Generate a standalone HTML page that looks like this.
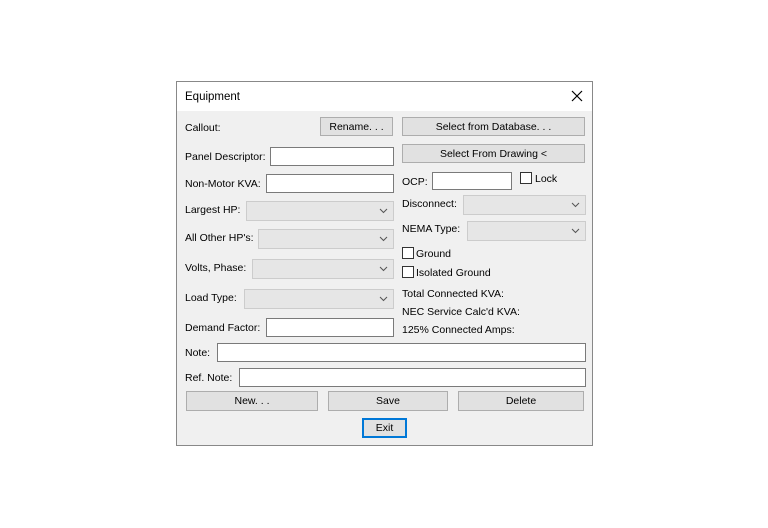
<!DOCTYPE html>
<html><head><style>
*{box-sizing:border-box;margin:0;padding:0}
body{width:768px;height:528px;background:#fff;position:relative;font-family:"Liberation Sans",sans-serif;font-size:10.5px;color:#000;overflow:hidden}
.win{position:absolute;left:176px;top:81px;width:417px;height:365px;border:1px solid #888;background:#f0f0f0}
.title{position:absolute;left:177px;top:82px;width:415px;height:29px;background:#fff}
.a{position:absolute;white-space:nowrap}
.l{position:absolute;white-space:nowrap;line-height:14px}
.in{position:absolute;background:#fff;border:1px solid #7a7a7a}
.btn{position:absolute;background:#e1e1e1;border:1px solid #adadad;text-align:center;line-height:18px}
.cb{position:absolute;background:#e6e6e6;border:1px solid #cccccc}
.cb svg{position:absolute;right:5px;top:6px}
.chk{position:absolute;width:12px;height:12px;background:#fff;border:1px solid #333}
</style></head><body>
<div class="win"></div>
<div class="title"></div>
<div class="l" style="left:185px;top:90px;font-size:11.5px">Equipment</div>
<svg class="a" style="left:571px;top:90px" width="12" height="12"><path d="M1 1L11 11M11 1L1 11" stroke="#000" stroke-width="1.2"/></svg>

<div class="l" style="left:185px;top:121px">Callout:</div>
<div class="btn" style="left:320px;top:117px;width:73px;height:19px">Rename. . .</div>
<div class="btn" style="left:402px;top:117px;width:183px;height:19px">Select from Database. . .</div>

<div class="l" style="left:185px;top:150px">Panel Descriptor:</div>
<div class="in" style="left:270px;top:147px;width:124px;height:19px"></div>
<div class="btn" style="left:402px;top:144px;width:183px;height:19px">Select From Drawing &lt;</div>

<div class="l" style="left:185px;top:177px">Non-Motor KVA:</div>
<div class="in" style="left:266px;top:174px;width:128px;height:19px"></div>
<div class="l" style="left:402px;top:175px">OCP:</div>
<div class="in" style="left:432px;top:172px;width:80px;height:18px"></div>
<div class="chk" style="left:520px;top:172px"></div>
<div class="l" style="left:535px;top:172px">Lock</div>

<div class="l" style="left:185px;top:203px">Largest HP:</div>
<div class="cb" style="left:246px;top:201px;width:148px;height:20px"><svg width="9" height="6"><path d="M1 1L4.5 4.5L8 1" stroke="#555" fill="none"/></svg></div>
<div class="l" style="left:402px;top:197px">Disconnect:</div>
<div class="cb" style="left:463px;top:195px;width:123px;height:20px"><svg width="9" height="6"><path d="M1 1L4.5 4.5L8 1" stroke="#555" fill="none"/></svg></div>

<div class="l" style="left:185px;top:231px">All Other HP's:</div>
<div class="cb" style="left:258px;top:229px;width:136px;height:20px"><svg width="9" height="6"><path d="M1 1L4.5 4.5L8 1" stroke="#555" fill="none"/></svg></div>
<div class="l" style="left:402px;top:222px">NEMA Type:</div>
<div class="cb" style="left:467px;top:221px;width:119px;height:20px"><svg width="9" height="6"><path d="M1 1L4.5 4.5L8 1" stroke="#555" fill="none"/></svg></div>

<div class="chk" style="left:402px;top:247px"></div>
<div class="l" style="left:416px;top:247px">Ground</div>
<div class="chk" style="left:402px;top:266px"></div>
<div class="l" style="left:416px;top:266px">Isolated Ground</div>

<div class="l" style="left:185px;top:261px">Volts, Phase:</div>
<div class="cb" style="left:252px;top:259px;width:142px;height:20px"><svg width="9" height="6"><path d="M1 1L4.5 4.5L8 1" stroke="#555" fill="none"/></svg></div>

<div class="l" style="left:185px;top:291px">Load Type:</div>
<div class="cb" style="left:244px;top:289px;width:150px;height:20px"><svg width="9" height="6"><path d="M1 1L4.5 4.5L8 1" stroke="#555" fill="none"/></svg></div>
<div class="l" style="left:402px;top:287px">Total Connected KVA:</div>
<div class="l" style="left:402px;top:305px">NEC Service Calc'd KVA:</div>
<div class="l" style="left:402px;top:323px">125% Connected Amps:</div>

<div class="l" style="left:185px;top:321px">Demand Factor:</div>
<div class="in" style="left:266px;top:318px;width:128px;height:19px"></div>

<div class="l" style="left:185px;top:346px">Note:</div>
<div class="in" style="left:217px;top:343px;width:369px;height:19px"></div>
<div class="l" style="left:185px;top:371px">Ref. Note:</div>
<div class="in" style="left:239px;top:368px;width:347px;height:19px"></div>

<div class="btn" style="left:186px;top:391px;width:132px;height:20px">New. . .</div>
<div class="btn" style="left:328px;top:391px;width:120px;height:20px">Save</div>
<div class="btn" style="left:458px;top:391px;width:126px;height:20px">Delete</div>
<div class="btn" style="left:362px;top:418px;width:45px;height:20px;border:2px solid #0078d7;line-height:16px">Exit</div>
</body></html>
